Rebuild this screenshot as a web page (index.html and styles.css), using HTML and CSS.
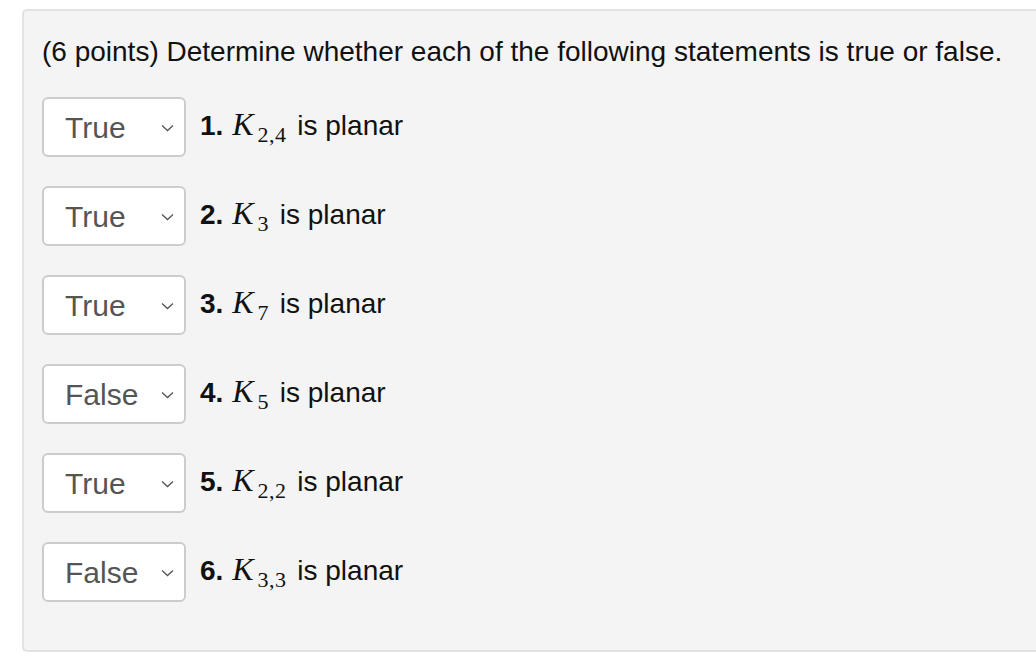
FILE: index.html
```html
<!DOCTYPE html>
<html>
<head>
<meta charset="utf-8">
<link rel="stylesheet" href="styles.css">
</head>
<body>
<div class="panel">
  <p class="title">(6 points) Determine whether each of the following statements is true or false.</p>
  <div class="rows">
    <div class="row">
      <div class="select"><span>True</span><svg class="chev" viewBox="0 0 13 8"><path d="M1 1.5 L6.5 6.5 L12 1.5" /></svg></div>
      <div class="label"><b>1.</b> <span class="math"><i>K</i><sub>2,4</sub></span> is planar</div>
    </div>
    <div class="row">
      <div class="select"><span>True</span><svg class="chev" viewBox="0 0 13 8"><path d="M1 1.5 L6.5 6.5 L12 1.5" /></svg></div>
      <div class="label"><b>2.</b> <span class="math"><i>K</i><sub>3</sub></span> is planar</div>
    </div>
    <div class="row">
      <div class="select"><span>True</span><svg class="chev" viewBox="0 0 13 8"><path d="M1 1.5 L6.5 6.5 L12 1.5" /></svg></div>
      <div class="label"><b>3.</b> <span class="math"><i>K</i><sub>7</sub></span> is planar</div>
    </div>
    <div class="row">
      <div class="select"><span>False</span><svg class="chev" viewBox="0 0 13 8"><path d="M1 1.5 L6.5 6.5 L12 1.5" /></svg></div>
      <div class="label"><b>4.</b> <span class="math"><i>K</i><sub>5</sub></span> is planar</div>
    </div>
    <div class="row">
      <div class="select"><span>True</span><svg class="chev" viewBox="0 0 13 8"><path d="M1 1.5 L6.5 6.5 L12 1.5" /></svg></div>
      <div class="label"><b>5.</b> <span class="math"><i>K</i><sub>2,2</sub></span> is planar</div>
    </div>
    <div class="row">
      <div class="select"><span>False</span><svg class="chev" viewBox="0 0 13 8"><path d="M1 1.5 L6.5 6.5 L12 1.5" /></svg></div>
      <div class="label"><b>6.</b> <span class="math"><i>K</i><sub>3,3</sub></span> is planar</div>
    </div>
  </div>
</div>
</body>
</html>
```
FILE: styles.css
```css
html, body {
  margin: 0;
  padding: 0;
  background: #ffffff;
  overflow: hidden;
}
body {
  padding: 9px 0 0 22px;
  font-family: "Liberation Sans", Arial, sans-serif;
  color: #111;
}
.panel {
  width: 1040px;
  height: 643px;
  box-sizing: border-box;
  background: #f4f4f4;
  border: 2px solid #e2e2e2;
  border-right: none;
  border-radius: 5px 0 0 5px;
  padding: 24px 0 0 18px;
}
.title {
  margin: 0;
  font-size: 28px;
  line-height: 34px;
}
.rows {
  display: flex;
  flex-direction: column;
  gap: 29px;
  margin-top: 28px;
}
.row {
  display: flex;
  align-items: center;
  gap: 14px;
}
.select {
  width: 144px;
  height: 60px;
  box-sizing: border-box;
  background: #ffffff;
  border: 2px solid #cccccc;
  border-radius: 6px;
  display: flex;
  align-items: center;
  padding: 2px 10px 0 21px;
  color: #555555;
  font-size: 30px;
}
.select span {
  flex: 1;
}
.chev {
  width: 13px;
  height: 8px;
  fill: none;
  stroke: #555555;
  stroke-width: 1.3;
}
.label {
  font-size: 28px;
  color: #111;
  margin-top: -6px;
}
.label b {
  font-weight: bold;
}
.math {
  font-family: "Liberation Serif", "Times New Roman", serif;
  font-size: 32px;
  margin-right: 3px;
}
.math i {
  font-style: italic;
  margin-left: 1px;
  margin-right: 2px;
}
.math sub {
  font-size: 22px;
  vertical-align: -7px;
  line-height: 0;
  margin-left: 2px;
  letter-spacing: 0.5px;
}
```
